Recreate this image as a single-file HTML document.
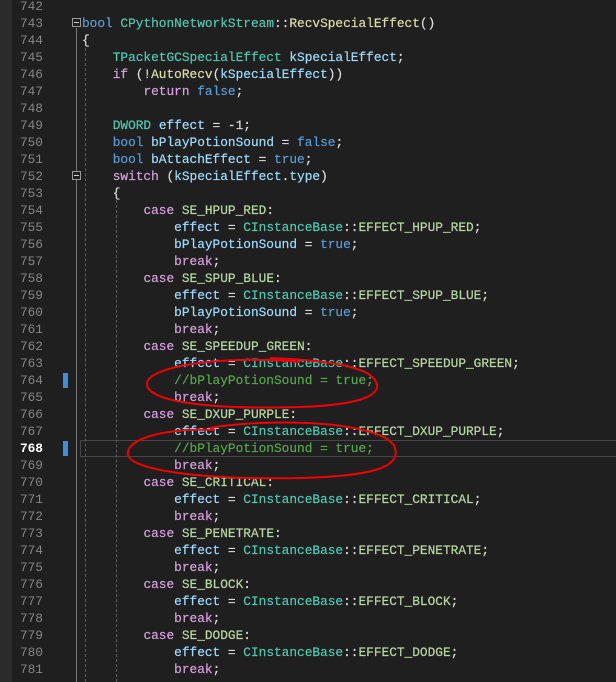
<!DOCTYPE html>
<html><head><meta charset="utf-8"><style>
body{margin:0;width:616px;height:682px;overflow:hidden;background:#1f1f1f;position:relative;font-family:"Liberation Mono",monospace;}
.strip{position:absolute;left:0;top:0;width:12px;height:682px;background:#2b2b2b;}
.ln{position:absolute;left:0;width:43px;text-align:right;color:#858585;font-size:12.8px;height:17px;line-height:17px;}
.cd{position:absolute;left:82px;white-space:pre;color:#dcdcdc;font-size:12.8px;height:17px;line-height:17px;-webkit-text-stroke:0.2px;}
.k{color:#569cd6}.p{color:#d8a0df}.t{color:#4ec9b0}.f{color:#dcdcaa}.v{color:#9cdcfe}.e{color:#b8d7a3}.c{color:#57a64a}
.g{position:absolute;border-left:1px dashed #5a5a5a;width:0}
.mk{position:absolute;left:63px;width:5px;height:15px;background:#3c8ddc;}
</style></head><body>
<div class="strip"></div>
<div style="position:absolute;left:80px;top:440px;width:540px;height:15px;border:1px solid #464646;"></div>
<div class="g" style="left:76px;top:28px;height:654px;border-left:1px solid #777"></div>
<div class="g" style="left:85px;top:48px;height:634px"></div>
<div class="g" style="left:116px;top:200px;height:482px"></div>
<div style="position:absolute;left:72px;top:18px;width:7px;height:7px;border:1px solid #999;background:#1f1f1f"></div>
<div style="position:absolute;left:74px;top:22px;width:5px;height:1px;background:#ccc;"></div>
<div style="position:absolute;left:72px;top:171px;width:7px;height:7px;border:1px solid #999;background:#1f1f1f"></div>
<div style="position:absolute;left:74px;top:175px;width:5px;height:1px;background:#ccc;"></div>
<div class="mk" style="top:373px"></div>
<div class="mk" style="top:441px"></div>
<div id="c"></div>
<script>
var L=[
"",
'<span class="k">bool</span> <span class="t">CPythonNetworkStream</span>::<span class="f">RecvSpecialEffect</span>()',
"{",
'    <span class="t">TPacketGCSpecialEffect</span> <span class="v">kSpecialEffect</span>;',
'    <span class="p">if</span> (!<span class="f">AutoRecv</span>(<span class="v">kSpecialEffect</span>))',
'        <span class="p">return</span> <span class="k">false</span>;',
"",
'    <span class="t">DWORD</span> <span class="v">effect</span> = -1;',
'    <span class="k">bool</span> <span class="v">bPlayPotionSound</span> = <span class="k">false</span>;',
'    <span class="k">bool</span> <span class="v">bAttachEffect</span> = <span class="k">true</span>;',
'    <span class="p">switch</span> (<span class="v">kSpecialEffect</span>.<span class="v">type</span>)',
"    {"];
function cs(n,eff,c){L.push('        <span class="p">case</span> <span class="e">'+n+'</span>:');
L.push('            <span class="v">effect</span> = <span class="t">CInstanceBase</span>::<span class="e">EFFECT_'+eff+'</span>;');
if(c==1)L.push('            <span class="v">bPlayPotionSound</span> = <span class="k">true</span>;');
if(c==2)L.push('            <span class="c">//bPlayPotionSound = true;</span>');
L.push('            <span class="p">break</span>;');}
cs("SE_HPUP_RED","HPUP_RED",1);cs("SE_SPUP_BLUE","SPUP_BLUE",1);cs("SE_SPEEDUP_GREEN","SPEEDUP_GREEN",2);cs("SE_DXUP_PURPLE","DXUP_PURPLE",2);
cs("SE_CRITICAL","CRITICAL",0);cs("SE_PENETRATE","PENETRATE",0);cs("SE_BLOCK","BLOCK",0);cs("SE_DODGE","DODGE",0);
var h="";for(var i=0;i<40;i++){var y=-2.5+i*17;var n=742+i;
h+='<div class="ln" style="top:'+y+'px;'+(n==768?'color:#fff;font-weight:bold':'')+'">'+n+'</div>';
h+='<div class="cd" style="top:'+y+'px">'+(L[i]||"")+'</div>';}
document.getElementById("c").innerHTML=h;
</script>
<svg style="position:absolute;left:0;top:0" width="616" height="682">
<path d="M300 362 C230 355 150 365 147 383 C145 400 200 410 300 407 C360 405 385 395 375 380 C365 365 320 360 270 358" fill="none" stroke="#e00" stroke-width="2"/>
<path d="M215 430 C160 428 125 440 128 455 C132 470 200 480 300 478 C380 476 400 465 395 448 C390 432 340 420 260 423 C240 424 220 426 210 428" fill="none" stroke="#e00" stroke-width="2"/>
</svg>
</body></html>
